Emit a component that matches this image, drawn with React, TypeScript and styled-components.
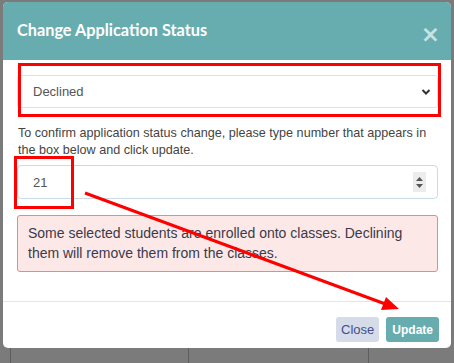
import React from 'react';
import styled, {createGlobalStyle} from 'styled-components';

const GlobalStyle = createGlobalStyle`
  html, body {
    margin: 0;
    padding: 0;
    background: #7b7b7b;
  }
  body {
    width: 454px;
    height: 363px;
    overflow: hidden;
    font-family: "Liberation Sans", Arial, sans-serif;
  }
`;

const Page = styled.div`
  position: relative;
  width: 454px;
  height: 363px;
  padding-top: 2px;
  box-sizing: border-box;
`;

const Modal = styled.div`
  margin: 0 3px;
  width: 448px;
  height: 346px;
  background: #fff;
  border-radius: 5px;
  overflow: hidden;
  display: flex;
  flex-direction: column;
`;

const Header = styled.div`
  height: 58px;
  background: #67adb0;
  display: flex;
  align-items: center;
  justify-content: space-between;
  padding: 0 11px 0 14px;
  box-sizing: border-box;
`;

const Title = styled.h4`
  margin: 0 0 3px;
  font-family: Lato, "Open Sans", sans-serif;
  font-weight: 700;
  font-size: 16.3px;
  color: #fff;
`;

const CloseX = styled.span`
  font-family: "DejaVu Sans", sans-serif;
  font-weight: 700;
  font-size: 23px;
  line-height: 1;
  color: #c9e2e3;
  margin-top: 6px;
`;

const Body = styled.div`
  flex: 1;
  padding: 15px 13px 0 14px;
  display: flex;
  flex-direction: column;
`;

const Marked = styled.div`
  position: relative;
  &::after {
    content: '';
    position: absolute;
    border: 3px solid #f00;
    pointer-events: none;
    left: ${p => p.$l}px;
    top: ${p => p.$t}px;
    right: ${p => p.$r}px;
    bottom: ${p => p.$b}px;
  }
`;

const SelectBox = styled.div`
  height: 33px;
  border: 1px solid #dbe3ea;
  border-radius: 3px;
  display: flex;
  align-items: center;
  justify-content: space-between;
  padding: 0 6px 0 15px;
  box-sizing: border-box;
  font-size: 13px;
  color: #555;
`;

const Hint = styled.p`
  margin: 17px 0 6px 1px;
  font-size: 12.6px;
  line-height: 17px;
  color: #444;
`;

const NumberBox = styled.div`
  height: 34px;
  border: 1px solid #c9dbe6;
  border-radius: 4px;
  display: flex;
  align-items: center;
  justify-content: space-between;
  padding: 0 11px 0 15px;
  box-sizing: border-box;
  font-size: 13px;
  color: #555;
`;

const Spinner = styled.div`
  width: 13px;
  height: 20px;
  background: #ececec;
  display: flex;
  flex-direction: column;
  align-items: center;
  justify-content: center;
  gap: 3px;
`;

const Alert = styled.div`
  margin-top: 16px;
  background: #fde8e8;
  border: 1px solid #f08585;
  border-radius: 3px;
  padding: 7px 10px 8px;
  font-size: 14px;
  line-height: 20px;
  color: #3a3a48;
`;

const Footer = styled.div`
  height: 47px;
  border-top: 1px solid #dfe5ea;
  display: flex;
  justify-content: flex-end;
  align-items: flex-start;
  gap: 7px;
  padding: 15px 12px 0 0;
  box-sizing: border-box;
`;

const Button = styled.button`
  height: 25px;
  border: none;
  border-radius: 3px;
  padding: 0 ${p => (p.$primary ? 6 : 5)}px;
  font-family: "Liberation Sans", Arial, sans-serif;
  font-size: ${p => (p.$primary ? 12 : 13)}px;
  font-weight: ${p => (p.$primary ? 700 : 400)};
  background: ${p => (p.$primary ? '#67adb0' : '#d5dbe8')};
  color: ${p => (p.$primary ? '#fff' : '#3f4f8f')};
`;

const BackRow = styled.div`
  height: 15px;
  display: grid;
  grid-template-columns: 11px 178px 180px 1fr;
  & > div {
    border-right: 1px solid #5e5e5e;
  }
  & > div:last-child {
    border-right: none;
  }
`;

const Overlay = styled.svg`
  position: absolute;
  left: 0;
  top: 0;
  pointer-events: none;
`;

const App = () => (
    <>
        <GlobalStyle/>
        <Page>
            <Modal>
                <Header>
                    <Title>Change Application Status</Title>
                    <CloseX>×</CloseX>
                </Header>
                <Body>
                    <Marked $l={1} $t={-12} $r={-3} $b={-9}>
                        <SelectBox>
                            <span>Declined</span>
                            <svg width="10" height="8" viewBox="0 0 10 8">
                                <path d="M1.5 2 L5 5.5 L8.5 2" fill="none" stroke="#333" strokeWidth="2"/>
                            </svg>
                        </SelectBox>
                    </Marked>
                    <Hint>
                        To confirm application status change, please type number that appears in the box below and click update.
                    </Hint>
                    <Marked $l={-3} $t={-9} $r={364} $b={-10}>
                        <NumberBox>
                            <span>21</span>
                            <Spinner>
                                <svg width="7" height="4" viewBox="0 0 7 4"><path d="M0 4 L3.5 0 L7 4Z" fill="#555"/></svg>
                                <svg width="7" height="4" viewBox="0 0 7 4"><path d="M0 0 L3.5 4 L7 0Z" fill="#555"/></svg>
                            </Spinner>
                        </NumberBox>
                    </Marked>
                    <Alert>
                        Some selected students are enrolled onto classes. Declining them will remove them from the classes.
                    </Alert>
                </Body>
                <Footer>
                    <Button>Close</Button>
                    <Button $primary>Update</Button>
                </Footer>
            </Modal>
            <BackRow>
                <div/>
                <div/>
                <div/>
                <div/>
            </BackRow>
            <Overlay width="454" height="363" viewBox="0 0 454 363">
                <line x1="85" y1="193" x2="388" y2="305" stroke="#f00" strokeWidth="3"/>
                <path d="M399 309 L381 310 L386 297 Z" fill="#f00"/>
            </Overlay>
        </Page>
    </>
);

export default App;
